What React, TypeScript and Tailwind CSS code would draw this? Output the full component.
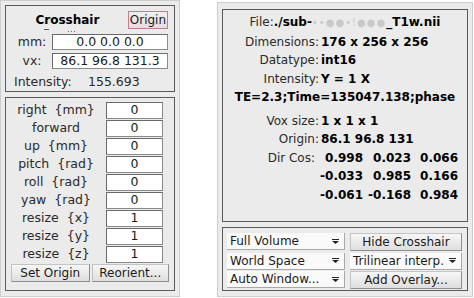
import React from "react";

const font = { fontFamily: '"DejaVu Sans", "Liberation Sans", sans-serif' };

function Entry({ value, className = "" }: { value: string; className?: string }) {
  return (
    <div
      className={`flex h-[16px] items-center justify-center border border-[#8a8a8a] border-t-[#6a6a6a] border-l-[#6a6a6a] bg-white text-[12.5px] leading-none text-[#1a1a1a] ${className}`}
    >
      {value}
    </div>
  );
}

function Btn({ label, className = "" }: { label: string; className?: string }) {
  return (
    <div
      className={`flex h-[18px] items-center justify-center border border-[#c4c4c4] border-b-[#8e8e8e] border-r-[#8e8e8e] bg-gradient-to-b from-[#f7f7f7] to-[#dedede] text-[12px] leading-none text-[#1a1a1a] ${className}`}
    >
      {label}
    </div>
  );
}

function Dropdown({ label }: { label: string }) {
  return (
    <div className="flex h-[17px] items-center justify-between border-b border-r border-[#a8a8a8] bg-[#fafafa] pl-[3px] pr-[5px] text-[12px] leading-none text-[#1a1a1a]">
      <span>{label}</span>
      <svg width="7" height="5" viewBox="0 0 7 5">
        <rect x="0" y="0" width="7" height="1" fill="#222" />
        <path d="M0 2 H7 L3.5 5 Z" fill="#222" />
      </svg>
    </div>
  );
}

const params = [
  ["right  {mm}", "0"],
  ["forward", "0"],
  ["up  {mm}", "0"],
  ["pitch  {rad}", "0"],
  ["roll  {rad}", "0"],
  ["yaw  {rad}", "0"],
  ["resize  {x}", "1"],
  ["resize  {y}", "1"],
  ["resize  {z}", "1"],
];

function Row({ label, value }: { label: string; value: React.ReactNode }) {
  return (
    <div className="grid grid-cols-[96px_1fr] items-center">
      <span className="text-right text-[#2a2a2a]">{label}</span>
      <span className="pl-[2px] font-bold text-black">{value}</span>
    </div>
  );
}

export default function App() {
  return (
    <div className="flex h-[298px] w-[474px] bg-white text-[12px]" style={font}>
      {/* left panel */}
      <div className="flex h-[297px] w-[180px] flex-col gap-[5px] border border-[#cdcdcd] bg-[#ebebeb] px-[4px] pb-[5px] pt-[4px]">
        <div className="relative flex h-[87px] flex-col border border-[#5a5a5a] px-[6px] pt-[5px]">
          <div className="flex h-[18px] items-center">
            <span className="w-[116px] text-center text-[12px] font-bold leading-none text-black">Crosshair</span>
            <Btn
              label="Origin"
              className="ml-[5px] w-[42px] !border-[#c07d93] !from-[#f1eef0] !to-[#e4dde1]"
            />
          </div>
          {/* faint marks under the title */}
          <span className="absolute left-[38px] top-[23px] h-[1px] w-[5px] bg-[#555]" />
          <span className="absolute left-[62px] top-[25px] flex gap-[2px]">
            <span className="h-[1px] w-[1px] bg-[#666]" />
            <span className="h-[1px] w-[1px] bg-[#666]" />
            <span className="h-[1px] w-[1px] bg-[#666]" />
          </span>
          <div className="mt-[5px] grid grid-cols-[40px_1fr] items-center gap-y-[3px]">
            <span className="text-center text-[12.5px] leading-none text-[#2a2a2a]">mm:</span>
            <Entry value="0.0 0.0 0.0" />
            <span className="text-center text-[12.5px] leading-none text-[#2a2a2a]">vx:</span>
            <Entry value="86.1 96.8 131.3" />
          </div>
          <div className="mt-[7px] flex items-center text-[12.5px] leading-none text-[#2a2a2a]">
            <span className="w-[76px] pl-[2px]">Intensity:</span>
            <span>155.693</span>
          </div>
        </div>

        <div className="flex flex-1 flex-col border border-[#5a5a5a] px-[5px] pt-[4px]">
          <div className="flex flex-col gap-[1px]">
            {params.map(([l, v]) => (
              <div key={l} className="flex h-[17px] items-center">
                <span className="w-[90px] whitespace-pre text-center text-[12.5px] leading-none text-[#2a2a2a]">{l}</span>
                <Entry value={v} className="ml-[5px] h-[17px] w-[57px]" />
              </div>
            ))}
          </div>
          <div className="mt-[1px] flex gap-[2px]">
            <Btn label="Set Origin" className="w-[79px] text-[12.5px]" />
            <Btn label="Reorient..." className="w-[78px] text-[12.5px]" />
          </div>
        </div>
      </div>

      {/* right panel */}
      <div className="ml-[37px] mt-[2px] flex h-[295px] w-[256px] flex-col gap-[5px] border border-[#cdcdcd] bg-[#ebebeb] px-[4px] pb-[5px] pt-[6px]">
        <div className="flex flex-1 flex-col border border-[#5a5a5a] pt-[3px] leading-[18.5px]">
          <div className="text-center text-[#2a2a2a]">
            File:<span className="font-bold text-black">./sub-</span>
            <span className="text-[10px] tracking-[1px] text-[#c9c9c9] blur-[0.6px]">••●●•!●●●</span>
            <span className="font-bold text-black">_T1w.nii</span>
          </div>
          <Row label="Dimensions:" value="176 x 256 x 256" />
          <Row label="Datatype:" value="int16" />
          <Row label="Intensity:" value="Y = 1 X" />
          <div className="text-center font-bold text-black">TE=2.3;Time=135047.138;phase</div>
          <div className="h-[5px]" />
          <Row label="Vox size:" value="1 x 1 x 1" />
          <Row label="Origin:" value="86.1 96.8 131" />
          <div className="grid grid-cols-[96px_44px_48px_47px] font-bold text-black">
            <span className="pr-[4px] text-right font-normal text-[#2a2a2a]">Dir Cos:</span>
            <span className="text-right">0.998</span>
            <span className="text-right">0.023</span>
            <span className="text-right">0.066</span>
            <span />
            <span className="text-right">-0.033</span>
            <span className="text-right">0.985</span>
            <span className="text-right">0.166</span>
            <span />
            <span className="text-right">-0.061</span>
            <span className="text-right">-0.168</span>
            <span className="text-right">0.984</span>
          </div>
        </div>

        <div className="grid h-[64px] grid-cols-[118px_112px] gap-x-[5px] gap-y-[1px] border border-[#5a5a5a] px-[4px] pt-[5px]">
          <Dropdown label="Full Volume" />
          <Btn label="Hide Crosshair" className="h-[17px]" />
          <Dropdown label="World Space" />
          <Dropdown label="Trilinear interp." />
          <Dropdown label="Auto Window..." />
          <Btn label="Add Overlay..." className="h-[17px]" />
        </div>
      </div>
    </div>
  );
}
